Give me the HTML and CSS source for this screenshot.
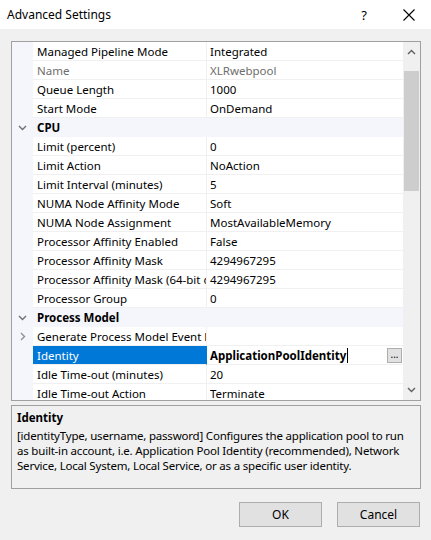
FILE: index.html
```html
<!DOCTYPE html>
<html>
<head>
<meta charset="utf-8">
<link rel="stylesheet" href="styles.css">
</head>
<body>
<div class="dialog">
  <div class="titlebar">
    <span class="title">Advanced Settings</span>
    <span class="help">?</span>
    <span class="close"><svg width="12" height="12" viewBox="0 0 12 12"><path d="M0.5 0.5 L11.5 11.5 M11.5 0.5 L0.5 11.5" stroke="#000" stroke-width="1.1" fill="none"/></svg></span>
  </div>
  <div class="body">
    <div class="grid">
      <div class="rows">
        <div class="row"><div class="gut"></div><div class="name">Managed Pipeline Mode</div><div class="val">Integrated</div></div>
        <div class="row dim"><div class="gut"></div><div class="name">Name</div><div class="val">XLRwebpool</div></div>
        <div class="row"><div class="gut"></div><div class="name">Queue Length</div><div class="val">1000</div></div>
        <div class="row"><div class="gut"></div><div class="name">Start Mode</div><div class="val">OnDemand</div></div>
        <div class="row cat"><div class="gut"><svg width="9" height="6" viewBox="0 0 9 6"><path d="M1 1 L4.5 4.5 L8 1" stroke="#707070" stroke-width="1.4" fill="none"/></svg></div><div class="catname">CPU</div></div>
        <div class="row"><div class="gut"></div><div class="name">Limit (percent)</div><div class="val">0</div></div>
        <div class="row"><div class="gut"></div><div class="name">Limit Action</div><div class="val">NoAction</div></div>
        <div class="row"><div class="gut"></div><div class="name">Limit Interval (minutes)</div><div class="val">5</div></div>
        <div class="row"><div class="gut"></div><div class="name">NUMA Node Affinity Mode</div><div class="val">Soft</div></div>
        <div class="row"><div class="gut"></div><div class="name">NUMA Node Assignment</div><div class="val">MostAvailableMemory</div></div>
        <div class="row"><div class="gut"></div><div class="name">Processor Affinity Enabled</div><div class="val">False</div></div>
        <div class="row"><div class="gut"></div><div class="name">Processor Affinity Mask</div><div class="val">4294967295</div></div>
        <div class="row"><div class="gut"></div><div class="name">Processor Affinity Mask (64-bit option)</div><div class="val">4294967295</div></div>
        <div class="row"><div class="gut"></div><div class="name">Processor Group</div><div class="val">0</div></div>
        <div class="row cat"><div class="gut"><svg width="9" height="6" viewBox="0 0 9 6"><path d="M1 1 L4.5 4.5 L8 1" stroke="#707070" stroke-width="1.4" fill="none"/></svg></div><div class="catname">Process Model</div></div>
        <div class="row"><div class="gut"><svg width="6" height="9" viewBox="0 0 6 9"><path d="M1 1 L4.5 4.5 L1 8" stroke="#909090" stroke-width="1.4" fill="none"/></svg></div><div class="name">Generate Process Model Event Log Entry</div><div class="val"></div></div>
        <div class="row sel"><div class="gut"></div><div class="name">Identity</div><div class="val"><span class="bold">ApplicationPoolIdentity</span><span class="caret"></span><span class="dots">...</span></div></div>
        <div class="row"><div class="gut"></div><div class="name">Idle Time-out (minutes)</div><div class="val">20</div></div>
        <div class="row"><div class="gut"></div><div class="name">Idle Time-out Action</div><div class="val">Terminate</div></div>
      </div>
      <div class="scroll">
        <svg class="arrow" width="9" height="6" viewBox="0 0 9 6"><path d="M1 5 L4.5 1.5 L8 5" stroke="#606060" stroke-width="1.4" fill="none"/></svg>
        <div class="track"><div class="thumb"></div></div>
        <svg class="arrow" width="9" height="6" viewBox="0 0 9 6"><path d="M1 1 L4.5 4.5 L8 1" stroke="#606060" stroke-width="1.4" fill="none"/></svg>
      </div>
    </div>
    <div class="desc">
      <div class="dtitle">Identity</div>
      <div class="dtext">[identityType, username, password] Configures the application pool to run as built-in account, i.e. Application Pool Identity (recommended), Network Service, Local System, Local Service, or as a specific user identity.</div>
    </div>
    <div class="buttons">
      <div class="btn">OK</div>
      <div class="btn">Cancel</div>
    </div>
  </div>
</div>
</body>
</html>
```

FILE: styles.css
```css
* { box-sizing: border-box; }
html, body { margin: 0; padding: 0; }
body {
  font-family: "Noto Sans", "Open Sans", sans-serif;
  font-size: 11.5px;
  color: #000;
  background: #f0f0f0;
}
.dialog {
  width: 431px;
  height: 540px;
  display: flex;
  flex-direction: column;
  background: #f0f0f0;
  position: relative;
}
.titlebar {
  height: 29px;
  background: #fff;
  display: flex;
  align-items: center;
  padding-left: 7px;
  font-size: 12px;
}
.title { flex: 1; }
.help { width: 46px; text-align: center; font-size: 13px; padding-left: 4px; }
.close { width: 46px; display: flex; justify-content: center; padding-left: 2px; }
.body {
  flex: 1;
  padding: 12px 11px 0 11px;
  display: flex;
  flex-direction: column;
}
.grid {
  width: 410px;
  height: 360px;
  border: 1px solid #a0a0a0;
  background: #fff;
  display: flex;
  overflow: hidden;
}
.rows { width: 391px; display: flex; flex-direction: column; }
.row {
  height: 19px;
  flex: none;
  display: flex;
  line-height: 20px;
}
.gut {
  width: 21px;
  flex: none;
  background: #f4f6fb;
  display: flex;
  align-items: center;
  justify-content: center;
}
.name {
  width: 174px;
  flex: none;
  padding-left: 4px;
  white-space: nowrap;
  overflow: hidden;
  color: #000;
  border-bottom: 1px solid #f0f0f0;
  border-right: 1px solid #f0f0f0;
}
.val {
  flex: 1;
  padding-left: 3px;
  white-space: nowrap;
  overflow: hidden;
  border-bottom: 1px solid #f0f0f0;
  display: flex;
  align-items: center;
  padding-top: 1px;
}
.dim .name, .dim .val { color: #6d6d6d; }
.cat { background: #f4f6fb; }
.catname { font-weight: bold; padding-left: 4px; flex: 1; }
.sel .name { background: #0078d7; color: #fff; border-right-color: #0078d7; }
.bold { font-weight: bold; }
.caret { width: 1px; height: 15px; background: #000; margin-left: 1px; }
.dots {
  margin-left: auto;
  margin-right: 1px;
  width: 15px;
  height: 15px;
  border: 1px solid #adadad;
  background: #e1e1e1;
  font-size: 10px;
  line-height: 10px;
  text-align: center;
}
.scroll {
  width: 17px;
  background: #f0f0f0;
  display: flex;
  flex-direction: column;
  align-items: center;
}
.arrow { margin: 7px 0 7px; flex: none; }
.track { flex: 1; width: 100%; padding: 9px 1px 0 1px; }
.thumb { height: 120px; background: #cdcdcd; }
.desc {
  margin-top: 4px;
  width: 410px;
  height: 84px;
  border: 1px solid #a0a0a0;
  padding: 4px 5px 2px 5px;
  line-height: 15px;
}
.dtitle { font-weight: bold; margin-bottom: 3px; }
.dtext { letter-spacing: -0.2px; }
.buttons {
  display: flex;
  justify-content: flex-end;
  gap: 15px;
  margin-top: 13px;
}
.btn {
  width: 83px;
  height: 25px;
  border: 1px solid #adadad;
  background: #e1e1e1;
  display: flex;
  align-items: center;
  justify-content: center;
  font-size: 12px;
}
```
